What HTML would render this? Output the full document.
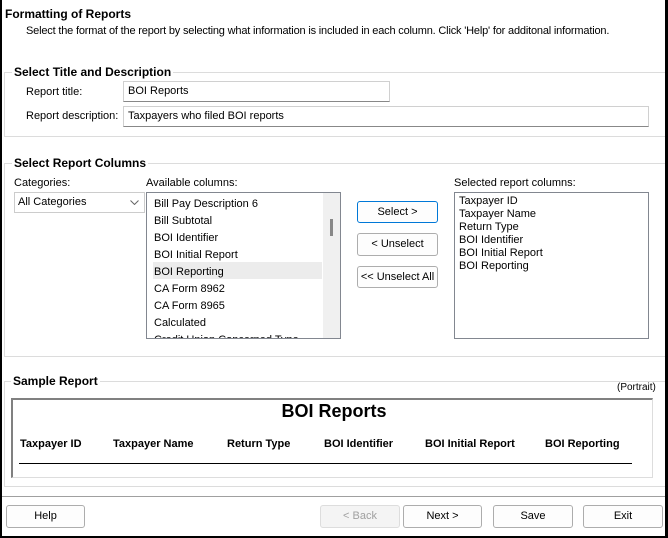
<!DOCTYPE html>
<html><head><style>
*{margin:0;padding:0;box-sizing:border-box}
body{width:668px;height:538px;background:#fff;position:relative;overflow:hidden;font-family:"Liberation Sans",sans-serif;font-size:11px;color:#000}
.a{position:absolute;white-space:nowrap}
.b{font-weight:bold;font-size:12px}
.grp{position:absolute;border:1px solid #dcdcdc}
.inp{position:absolute;border:1px solid #d0d0d0;border-bottom:1px solid #888;background:#fff;padding:3px 4px;font-size:11px}
.btn{position:absolute;border:1px solid #adadad;border-radius:3px;background:#fdfdfd;text-align:center;font-size:11px}
.lb{position:absolute;border:1px solid #828790;background:#fff}
.hd{position:absolute;font-weight:bold;font-size:11px;top:438px}
</style></head><body>
<div class="a" style="left:0;top:0;width:2px;height:538px;background:#000"></div>
<div class="a" style="right:0;top:0;width:3px;height:538px;background:#000;z-index:5"></div>
<div class="a" style="left:0;bottom:0;width:668px;height:2px;background:#000"></div>

<div class="a b" style="left:5px;top:7px">Formatting of Reports</div>
<div class="a" style="left:26px;top:25px;letter-spacing:-0.18px">Select the format of the report by selecting what information is included in each column. Click 'Help' for additonal information.</div>

<div class="grp" style="left:4px;top:72px;width:662px;height:65px"></div>
<div class="a b" style="left:12px;top:65px;background:#fff;padding:0 2px">Select Title and Description</div>
<div class="a" style="left:26px;top:86px">Report title:</div>
<div class="inp" style="left:123px;top:81px;width:267px;height:21px">BOI Reports</div>
<div class="a" style="left:26px;top:110px">Report description:</div>
<div class="inp" style="left:123px;top:106px;width:526px;height:21px">Taxpayers who filed BOI reports</div>

<div class="grp" style="left:4px;top:163px;width:662px;height:194px"></div>
<div class="a b" style="left:12px;top:156px;background:#fff;padding:0 2px">Select Report Columns</div>
<div class="a" style="left:14px;top:177px">Categories:</div>
<div class="a" style="left:14px;top:192px;width:131px;height:21px;border:1px solid #ccc;background:#fff;padding:3px 3px">All Categories<svg style="position:absolute;right:5px;top:7px" width="9" height="5"><path d="M0.5 0.5L4.5 4.5L8.5 0.5" fill="none" stroke="#666"/></svg></div>
<div class="a" style="left:146px;top:177px">Available columns:</div>
<div class="lb" style="left:146px;top:192px;width:195px;height:147px;overflow:hidden">
<div class="a" style="left:176px;top:0;width:17px;height:145px;background:#f0f0f0"></div>
<div class="a" style="left:183px;top:26px;width:3px;height:17px;background:#888"></div>
<div class="a" style="left:6px;top:69px;width:169px;height:17px;background:#ececec"></div>
<div class="a" style="left:7px;top:3px;line-height:17px;font-size:11px">Bill Pay Description 6<br>Bill Subtotal<br>BOI Identifier<br>BOI Initial Report<br>BOI Reporting<br>CA Form 8962<br>CA Form 8965<br>Calculated<br>Credit Union Concerned Type</div>
</div>
<div class="btn" style="left:357px;top:201px;width:81px;height:22px;border:1px solid #0078d7;line-height:20px">Select &gt;</div>
<div class="btn" style="left:357px;top:233px;width:81px;height:23px;line-height:21px">&lt; Unselect</div>
<div class="btn" style="left:357px;top:266px;width:81px;height:22px;line-height:20px">&lt;&lt; Unselect All</div>
<div class="a" style="left:454px;top:177px">Selected report columns:</div>
<div class="lb" style="left:454px;top:192px;width:195px;height:147px">
<div class="a" style="left:4px;top:2px;line-height:13px">Taxpayer ID<br>Taxpayer Name<br>Return Type<br>BOI Identifier<br>BOI Initial Report<br>BOI Reporting</div>
</div>

<div class="grp" style="left:4px;top:381px;width:662px;height:106px"></div>
<div class="a b" style="left:11px;top:374px;background:#fff;padding:0 2px">Sample Report</div>
<div class="a" style="left:617px;top:382px;font-size:10px">(Portrait)</div>
<div class="a" style="left:11px;top:398px;width:642px;height:80px;border:1px solid #ddd;border-top:2px solid #808080;border-left:2px solid #808080"></div>
<div class="a" style="left:0;width:668px;text-align:center;top:401px;font-weight:bold;font-size:18px">BOI Reports</div>
<div class="hd" style="left:20px">Taxpayer ID</div>
<div class="hd" style="left:113px">Taxpayer Name</div>
<div class="hd" style="left:227px">Return Type</div>
<div class="hd" style="left:324px">BOI Identifier</div>
<div class="hd" style="left:425px">BOI Initial Report</div>
<div class="hd" style="left:545px">BOI Reporting</div>
<div class="a" style="left:19px;top:463px;width:613px;height:1px;background:#000"></div>

<div class="a" style="left:2px;top:496px;width:663px;height:1px;background:#a0a0a0"></div>
<div class="btn" style="left:6px;top:505px;width:79px;height:23px;line-height:21px">Help</div>
<div class="btn" style="left:320px;top:505px;width:80px;height:23px;line-height:21px;color:#a0a0a0;border-color:#ddd;background:#f4f4f4">&lt; Back</div>
<div class="btn" style="left:403px;top:505px;width:79px;height:23px;line-height:21px">Next &gt;</div>
<div class="btn" style="left:493px;top:505px;width:80px;height:23px;line-height:21px">Save</div>
<div class="btn" style="left:583px;top:505px;width:80px;height:23px;line-height:21px">Exit</div>
</body></html>
